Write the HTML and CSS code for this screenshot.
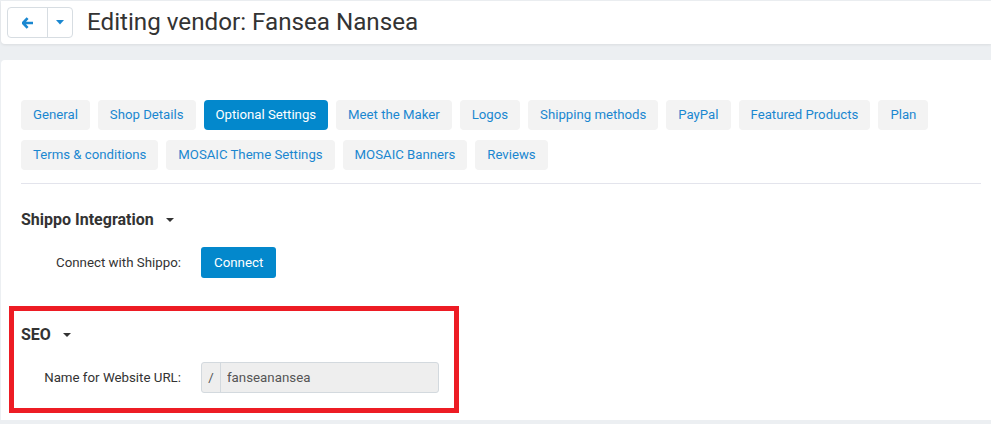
FILE: index.html
```html
<!DOCTYPE html>
<html lang="en">
<head>
<meta charset="UTF-8" />
<title>Editing vendor: Fansea Nansea</title>
<link rel="stylesheet" href="styles.css">
</head>
<body>
  <div class="header">
    <div class="btn-group">
      <button class="btn-back" type="button">
        <svg width="12" height="12" viewBox="0 0 12 12"><path d="M5.6 1.2 L1 6 L5.6 10.8 M1.6 6 H11" fill="none" stroke="#1a87d0" stroke-width="2.6" stroke-linejoin="round"/></svg>
      </button>
      <button class="btn-caret" type="button">
        <svg width="8" height="5" viewBox="0 0 8 5"><path d="M0 0 H8 L4 4.5 Z" fill="#1a87d0"/></svg>
      </button>
    </div>
    <h1 class="title">Editing vendor: Fansea Nansea</h1>
  </div>

  <div class="content">
    <ul class="tabs">
      <li><a href="#">General</a></li>
      <li><a href="#">Shop Details</a></li>
      <li class="active"><a href="#">Optional Settings</a></li>
      <li><a href="#">Meet the Maker</a></li>
      <li><a href="#">Logos</a></li>
      <li><a href="#">Shipping methods</a></li>
      <li><a href="#">PayPal</a></li>
      <li><a href="#">Featured Products</a></li>
      <li><a href="#">Plan</a></li>
      <li><a href="#">Terms &amp; conditions</a></li>
      <li><a href="#">MOSAIC Theme Settings</a></li>
      <li><a href="#">MOSAIC Banners</a></li>
      <li><a href="#">Reviews</a></li>
    </ul>

    <div class="section">
      <h3 class="section-title">Shippo Integration <span class="caret"></span></h3>
      <div class="control-group">
        <label class="control-label">Connect with Shippo:</label>
        <button class="btn-primary" type="button">Connect</button>
      </div>
    </div>

    <div class="section seo">
      <h3 class="section-title">SEO <span class="caret"></span></h3>
      <div class="control-group">
        <label class="control-label">Name for Website URL:</label>
        <div class="input-prepend">
          <span class="add-on">/</span>
          <input type="text" value="fanseanansea" readonly>
        </div>
      </div>
    </div>

    <div class="highlight"></div>
  </div>
</body>
</html>
```

FILE: styles.css
```css
* {
  box-sizing: border-box;
}
body {
  margin: 0;
  background: #eceff2;
  font-family: Roboto, "Liberation Sans", sans-serif;
  color: #333;
  font-size: 13.3px;
}
.header {
  margin: 1px 0 0 1px;
  height: 43px;
  background: #fff;
  border-radius: 0 0 0 4px;
  box-shadow: 0 1px 3px rgba(0, 0, 0, 0.08);
  display: flex;
  align-items: center;
  padding: 0 6px;
}
.btn-group {
  display: flex;
  height: 31px;
  border: 1px solid #d7dde2;
  border-radius: 4px;
  background: #fff;
}
.btn-group button {
  background: none;
  border: none;
  padding: 0;
  display: flex;
  align-items: center;
  justify-content: center;
  cursor: pointer;
}
.btn-back {
  width: 40px;
  border-right: 1px solid #d7dde2 !important;
}
.btn-caret {
  width: 24px;
}
.title {
  margin: 0 0 0 14px;
  font-size: 24.2px;
  font-weight: 400;
  color: #333;
  position: relative;
  top: -1px;
}
.content {
  position: relative;
  margin: 16px 0 0 1px;
  background: #fff;
  padding: 40px 10px 27px 20px;
  border-radius: 4px 0 0 0;
}
.tabs {
  list-style: none;
  margin: 0;
  padding: 0 0 13px;
  display: flex;
  flex-wrap: wrap;
  gap: 10px 8px;
  border-bottom: 1px solid #e3e4ec;
}
.tabs a {
  display: block;
  height: 30px;
  line-height: 30px;
  padding: 0 12px;
  background: #f3f3f3;
  color: #1a87d0;
  border-radius: 4px;
  text-decoration: none;
  font-size: 13.2px;
}
.tabs .active a {
  background: #0388cc;
  color: #fff;
}
.section {
  margin-top: 25px;
}
.seo {
  margin-top: 46px;
}
.section-title {
  margin: 0 0 16px;
  font-size: 16px;
  line-height: 22px;
  font-weight: 700;
  color: #333;
  display: flex;
  align-items: center;
}
.caret {
  margin-left: 12px;
  width: 0;
  height: 0;
  border-left: 4px solid transparent;
  border-right: 4px solid transparent;
  border-top: 4px solid #333;
}
.control-group {
  display: flex;
  align-items: center;
  gap: 20px;
}
.control-label {
  width: 160px;
  text-align: right;
  color: #333;
}
.btn-primary {
  height: 31px;
  padding: 0 13px;
  border: none;
  border-radius: 3px;
  background: #0388cc;
  color: #fff;
  font-family: inherit;
  font-size: 13.3px;
  cursor: pointer;
}
.input-prepend {
  display: flex;
  width: 238px;
  height: 31px;
  border: 1px solid #d3d9de;
  border-radius: 3px;
  background: #eee;
}
.add-on {
  width: 19px;
  border-right: 1px solid #d3d9de;
  display: flex;
  align-items: center;
  justify-content: center;
  color: #555;
}
.input-prepend input {
  flex: 1;
  min-width: 0;
  border: none;
  background: transparent;
  padding: 0 6px;
  font-family: inherit;
  font-size: 13.3px;
  color: #555;
  outline: none;
}
.highlight {
  position: absolute;
  left: 8px;
  top: 246px;
  width: 450px;
  height: 107px;
  border: 5px solid #ed1c24;
  pointer-events: none;
}
```
